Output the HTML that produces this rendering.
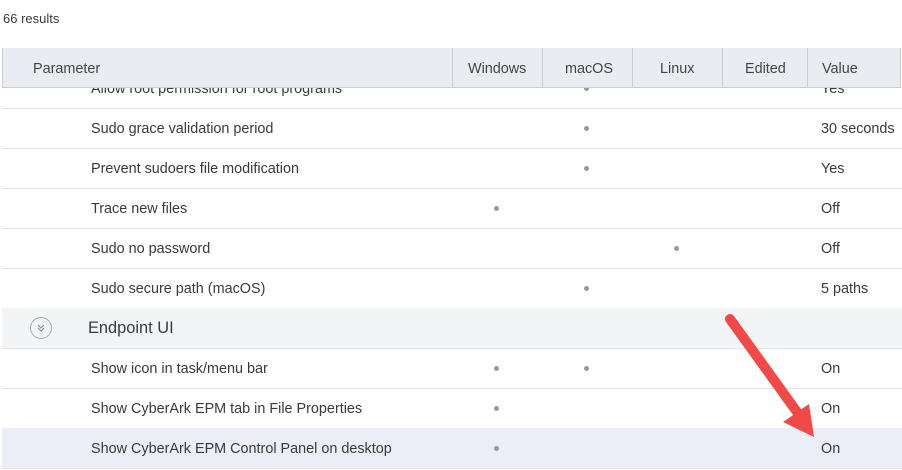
<!DOCTYPE html><html><head><style>
body{margin:0;width:902px;height:470px;background:#fff;font-family:"Liberation Sans",sans-serif;color:#3a3a3a;overflow:hidden;position:relative}
.a{position:absolute}
.t{position:absolute;font-size:14.4px;line-height:16px;white-space:nowrap;margin-top:1px}
.row{position:absolute;left:2px;width:900px;height:40px;border-bottom:1px solid #e3e3e3}
.d{position:absolute;width:5px;height:5px;border-radius:50%;background:#999}
</style></head><body>
<div class="t" style="left:3px;top:10px;font-size:13px">66 results</div>
<div class="row" style="top:68px"></div>
<div class="t" style="left:91px;top:80px">Allow root permission for root programs</div>
<div class="d" style="left:584px;top:86px"></div>
<div class="t" style="left:821px;top:80px">Yes</div>
<div class="row" style="top:108px"></div>
<div class="t" style="left:91px;top:120px">Sudo grace validation period</div><div class="d" style="left:584px;top:126px"></div><div class="t" style="left:821px;top:120px">30 seconds</div>
<div class="row" style="top:148px"></div>
<div class="t" style="left:91px;top:160px">Prevent sudoers file modification</div><div class="d" style="left:584px;top:166px"></div><div class="t" style="left:821px;top:160px">Yes</div>
<div class="row" style="top:188px"></div>
<div class="t" style="left:91px;top:200px">Trace new files</div><div class="d" style="left:494px;top:206px"></div><div class="t" style="left:821px;top:200px">Off</div>
<div class="row" style="top:228px"></div>
<div class="t" style="left:91px;top:240px">Sudo no password</div><div class="d" style="left:674px;top:246px"></div><div class="t" style="left:821px;top:240px">Off</div>
<div class="row" style="top:268px"></div>
<div class="t" style="left:91px;top:280px">Sudo secure path (macOS)</div><div class="d" style="left:584px;top:286px"></div><div class="t" style="left:821px;top:280px">5 paths</div>
<div class="row" style="top:308px;background:#f3f4f6"></div>
<div class="a" style="left:30px;top:317px;width:22px;height:22px;border:1px solid #aaa;border-radius:50%;box-sizing:border-box"></div>
<svg class="a" style="left:36px;top:323px" width="10" height="10"><path d="M2 2l3 3 3-3M2 5l3 3 3-3" fill="none" stroke="#888" stroke-width="1"/></svg>
<div class="t" style="left:88px;top:318px;font-size:16.4px;line-height:19px">Endpoint UI</div>
<div class="row" style="top:348px"></div>
<div class="t" style="left:91px;top:360px">Show icon in task/menu bar</div><div class="d" style="left:494px;top:366px"></div><div class="d" style="left:584px;top:366px"></div><div class="t" style="left:821px;top:360px">On</div>
<div class="row" style="top:388px"></div>
<div class="t" style="left:91px;top:400px">Show CyberArk EPM tab in File Properties</div><div class="d" style="left:494px;top:406px"></div><div class="t" style="left:821px;top:400px">On</div>
<div class="row" style="top:428px;background:#eceef7"></div>
<div class="t" style="left:91px;top:440px">Show CyberArk EPM Control Panel on desktop</div><div class="d" style="left:494px;top:446px"></div><div class="t" style="left:821px;top:440px">On</div>
<div class="a" style="left:2px;top:48px;width:899px;height:40px;background:#e9edf1;border:1px solid #ccc;border-top:none;box-sizing:border-box"></div>
<div class="a" style="left:452px;top:48px;width:1px;height:40px;background:#ccc"></div>
<div class="a" style="left:542px;top:48px;width:1px;height:40px;background:#ccc"></div>
<div class="a" style="left:632px;top:48px;width:1px;height:40px;background:#ccc"></div>
<div class="a" style="left:722px;top:48px;width:1px;height:40px;background:#ccc"></div>
<div class="a" style="left:807px;top:48px;width:1px;height:40px;background:#ccc"></div>
<div class="t" style="left:33px;top:60px;color:#444">Parameter</div>
<div class="t" style="left:468px;top:60px;color:#444">Windows</div>
<div class="t" style="left:565px;top:60px;color:#444">macOS</div>
<div class="t" style="left:660px;top:60px;color:#444">Linux</div>
<div class="t" style="left:745px;top:60px;color:#444">Edited</div>
<div class="t" style="left:822px;top:60px;color:#444">Value</div>
<svg class="a" style="left:0;top:0" width="902" height="470">
<line x1="730" y1="319" x2="797" y2="412" stroke="#f24848" stroke-width="10" stroke-linecap="round"/>
<polygon points="783,422 809,404 814,437" fill="#f24848"/>
</svg>
</body></html>
